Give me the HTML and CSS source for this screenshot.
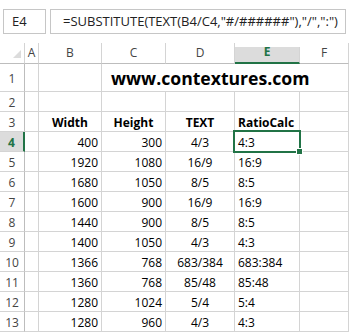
FILE: index.html
```html
<!DOCTYPE html>
<html>
<head>
<meta charset="utf-8">
<link rel="stylesheet" href="styles.css">
</head>
<body>
<div class="fbar">
  <div class="namebox">E4</div>
  <div class="formula">=SUBSTITUTE(TEXT(B4/C4,"#/######"),"/",":")</div>
</div>
<div class="sheet">
  <div class="ch corner"><svg class="tri" width="8" height="8" viewBox="0 0 8 8"><polygon points="8,0 8,8 0,8" fill="#dcdcdc"/></svg></div>
  <div class="ch">A</div><div class="ch">B</div><div class="ch">C</div><div class="ch">D</div><div class="ch sel">E</div><div class="ch last">F</div>

  <div class="rh tall">1</div><div class="c tall"></div><div class="c tall"></div><div class="c tall title">www.contextures.com</div>

  <div class="rh">2</div><div class="c"></div><div class="c"></div><div class="c"></div><div class="c"></div><div class="c"></div><div class="c"></div>

  <div class="rh">3</div><div class="c"></div><div class="c b ctr">Width</div><div class="c b ctr">Height</div><div class="c b ctr">TEXT</div><div class="c b">RatioCalc</div><div class="c"></div>

  <div class="rh sel">4</div><div class="c"></div><div class="c r">400</div><div class="c r">300</div><div class="c ctr">4/3</div><div class="c active">4:3</div><div class="c"></div>
  <div class="rh">5</div><div class="c"></div><div class="c r">1920</div><div class="c r">1080</div><div class="c ctr">16/9</div><div class="c">16:9</div><div class="c"></div>
  <div class="rh">6</div><div class="c"></div><div class="c r">1680</div><div class="c r">1050</div><div class="c ctr">8/5</div><div class="c">8:5</div><div class="c"></div>
  <div class="rh">7</div><div class="c"></div><div class="c r">1600</div><div class="c r">900</div><div class="c ctr">16/9</div><div class="c">16:9</div><div class="c"></div>
  <div class="rh">8</div><div class="c"></div><div class="c r">1440</div><div class="c r">900</div><div class="c ctr">8/5</div><div class="c">8:5</div><div class="c"></div>
  <div class="rh">9</div><div class="c"></div><div class="c r">1400</div><div class="c r">1050</div><div class="c ctr">4/3</div><div class="c">4:3</div><div class="c"></div>
  <div class="rh">10</div><div class="c"></div><div class="c r">1366</div><div class="c r">768</div><div class="c ctr">683/384</div><div class="c">683:384</div><div class="c"></div>
  <div class="rh">11</div><div class="c"></div><div class="c r">1360</div><div class="c r">768</div><div class="c ctr">85/48</div><div class="c">85:48</div><div class="c"></div>
  <div class="rh">12</div><div class="c"></div><div class="c r">1280</div><div class="c r">1024</div><div class="c ctr">5/4</div><div class="c">5:4</div><div class="c"></div>
  <div class="rh">13</div><div class="c"></div><div class="c r">1280</div><div class="c r">960</div><div class="c ctr">4/3</div><div class="c">4:3</div><div class="c"></div>
</div>
</body>
</html>
```

FILE: styles.css
```css
html, body {
  margin: 0;
  padding: 0;
  background: #fff;
  overflow: hidden;
}
body {
  font-family: "Open Sans", "Noto Sans", sans-serif;
  color: #000;
}
.fbar {
  height: 43px;
  box-sizing: border-box;
  padding: 9px 3px 0 3px;
  display: flex;
  align-items: flex-start;
  gap: 4px;
}
.namebox, .formula {
  height: 25px;
  box-sizing: border-box;
  border: 1px solid #c6c6c6;
  font-size: 13px;
  line-height: 23px;
  color: #222;
  white-space: nowrap;
  overflow: hidden;
}
.namebox {
  width: 43px;
  padding-left: 8px;
}
.formula {
  flex: 1;
  padding-left: 12px;
}
.sheet {
  display: grid;
  grid-template-columns: 25px 14px 63px 64px 69px 65px 1fr;
  grid-template-rows: 21px 28px repeat(12, 20px);
}
.sheet > div {
  box-sizing: border-box;
  border-right: 1px solid #d4d4d4;
  border-bottom: 1px solid #d4d4d4;
  font-size: 12px;
  white-space: nowrap;
  display: flex;
  align-items: center;
  padding: 0 3px;
}
.sheet > .ch {
  justify-content: center;
  align-items: flex-end;
  padding-bottom: 2px;
  color: #444;
  border-bottom-color: #bdbdbd;
}
.sheet > .corner {
  justify-content: flex-end;
  padding: 0 3px 5px 0;
}
.tri { display: block; }
.sheet > .ch.sel {
  background: #dcdcdc;
  color: #217346;
  font-weight: bold;
  border-bottom: 2px solid #217346;
  margin-top: 4px;
}
.sheet > .rh {
  justify-content: center;
  color: #444;
  border-right-color: #bdbdbd;
  padding: 2px 0 0 0;
}
.sheet > .rh.sel {
  background: #dcdcdc;
  color: #217346;
  font-weight: bold;
  border-right: 2px solid #217346;
}
.sheet > .c {
  padding-top: 2px;
}
.sheet > .title {
  grid-column: 4 / span 4;
  font-weight: bold;
  font-size: 17.6px;
  padding-left: 9px;
  padding-top: 1px;
}
.b { font-weight: bold; }
.ctr { justify-content: center; }
.r { justify-content: flex-end; }
.active {
  position: relative;
}
.active::after {
  content: "";
  position: absolute;
  left: -2px;
  top: -2px;
  right: -2px;
  bottom: -2px;
  border: 2px solid #217346;
}
.active::before {
  content: "";
  position: absolute;
  right: -4px;
  bottom: -4px;
  width: 5px;
  height: 5px;
  background: #217346;
  border: 1px solid #fff;
  z-index: 2;
}
```
